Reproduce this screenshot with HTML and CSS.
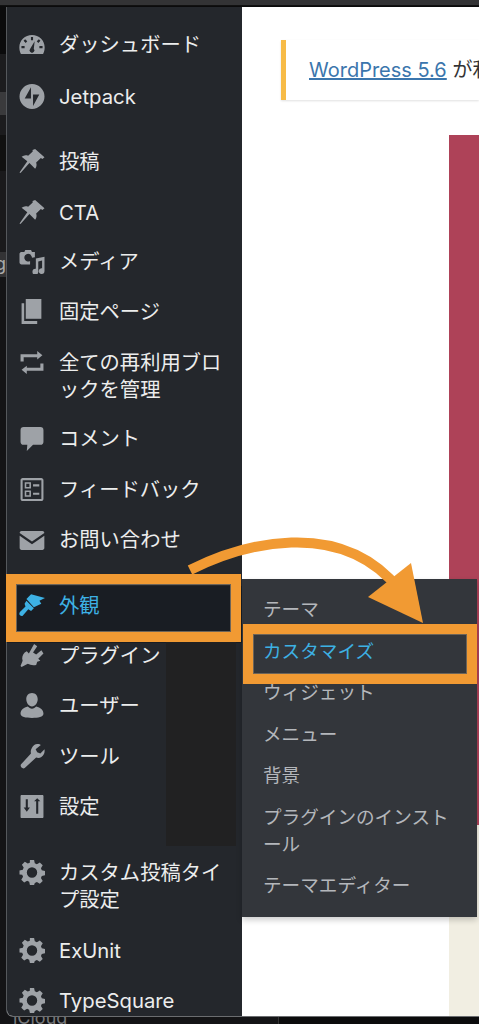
FILE: index.html
```
<!DOCTYPE html>
<html lang="ja">
<head>
<meta charset="utf-8">
<title>WordPress</title>
<link rel="stylesheet" href="styles.css">
</head>
<body>
<div class="topbar"></div>
<div class="backdrop">
  <span class="bd-row r1"></span><span class="bd-row r2"></span><span class="bd-row r3"></span><span class="bd-row r4"></span><span class="bd-row r5"></span><span class="bd-row r6">g</span><span class="bd-row r7"></span>
</div>
<div class="dock"><span class="bd-foot">iCloud</span></div>
<div class="window">
  <nav class="menu">
    <a class="item i-dash"><svg class="ic" viewBox="0 0 24 18"><path d="M12 0C5.400 0 0 5.200 0 11.500c0 2.500.6 4.600 1.500 6.500h21c.9-1.900 1.500-4 1.500-6.500C24 5.200 18.600 0 12 0zm-1 2h2v3h-2zM5.500 4l2 2L6 7.500l-2-2zm13 0L20 5.500l-2 2L16.500 6zM2 10.500h3v2H2zm17 0h3v2h-3zM14.500 6l-.8 7a2.300 2.300 0 1 1-3.400 0z" fill-rule="evenodd"/></svg><span>ダッシュボード</span></a>
    <a class="item i-jet"><svg class="ic" viewBox="0 0 24 24"><path d="M12 0a12 12 0 1 0 0 24 12 12 0 0 0 0-24zm-1 14H5l6-11zm2 7V10h6z" fill-rule="evenodd"/></svg><span>Jetpack</span></a>
    <a class="item i-post"><svg class="ic" viewBox="0 0 24 24"><path d="M15 0l9 8-2 1.500-1.500-.8-4.500 4.300c.8 2.500.3 4.500-1 6L9.500 13.500 1 23l-1-.5 7.500-10.700L2 7.500c2-1.500 4-1.900 6.300-1l4.400-4L12.500 1z"/></svg><span>投稿</span></a>
    <a class="item i-cta"><svg class="ic" viewBox="0 0 24 24"><path d="M15 0l9 8-2 1.500-1.500-.8-4.500 4.300c.8 2.500.3 4.500-1 6L9.500 13.500 1 23l-1-.5 7.500-10.700L2 7.500c2-1.500 4-1.900 6.300-1l4.400-4L12.500 1z"/></svg><span>CTA</span></a>
    <a class="item i-media"><svg class="ic" viewBox="0 0 26 26"><path d="M6 1h6l1 2h3v5.500l-3 .5c-.2-2.200-2-4-4-4a4 4 0 1 0 2 7.500V16H2c-1 0-2-1-2-2V5c0-1 1-2 2-2h3z" fill-rule="evenodd"/><path d="M17 10l9-2v15a3 3 0 1 1-2.500-3v-8l-4 1v11a3 3 0 1 1-6-.5 3 3 0 0 1 3.500-3z"/></svg><span>メディア</span></a>
    <a class="item i-page"><svg class="ic" viewBox="0 0 24 24"><path d="M6 0h15v19H6z"/><path d="M2 4h2.500v17H17v3H2z"/></svg><span>固定ページ</span></a>
    <a class="item i-block two"><svg class="ic" viewBox="0 0 24 24"><path d="M17 1l5 4-5 4V7H4v4H1V4h16zM7 23l-5-4 5-4v2h13v-4h3v7H7z"/></svg><span>全ての再利用ブロックを管理</span></a>
    <a class="item i-comment"><svg class="ic" viewBox="0 0 24 24"><path d="M4 1h16c2 0 3 1 3 3v11c0 2-1 3-3 3h-7l-6 6 .5-6H4c-2 0-3-1-3-3V4c0-2 1-3 3-3z"/></svg><span>コメント</span></a>
    <a class="item i-fb"><svg class="ic" viewBox="0 0 24 24"><path d="M3 1h18c1 0 2 1 2 2v18c0 1-1 2-2 2H3c-1 0-2-1-2-2V3c0-1 1-2 2-2zm0 2v18h18V3zm2 2h6v6H5zm1.500 1.500v3h3v-3zM13 7h6v2h-6zM5 13h6v6H5zm1.500 1.500v3h3v-3zM13 15h6v2h-6z" fill-rule="evenodd"/></svg><span>フィードバック</span></a>
    <a class="item i-mail"><svg class="ic wide" viewBox="0 0 26 20"><path d="M2 0h22c1 0 2 1 2 2L13 11 0 2c0-1 1-2 2-2zM0 5l13 9 13-9v13c0 1-1 2-2 2H2c-1 0-2-1-2-2z"/></svg><span>お問い合わせ</span></a>
    <a class="item i-look"><svg class="ic" viewBox="0 0 28 24"><path d="M13 0l15 4-6 3 2 3-8 4-8-9zM8 7l8 8-3 3-3-2-6 7c-2 1-5-1-3-4l6-6-1-3z"/></svg><span>外観</span></a>
    <a class="item i-plug"><svg class="ic" viewBox="0 0 24 24"><path d="M14 1l3 2-4 6 3 2 5-4 2 3-5 5 2 2-3 1-1 3c-3 1-6 0-8-1L2 23l-1-1 2-5C2 14 3 11 5 9l2-1 2 2z"/></svg><span>プラグイン</span></a>
    <a class="item i-user"><svg class="ic" viewBox="0 0 24 24"><path d="M12 0c3.500 0 5.500 2.800 5.500 6s-2.300 7-5.500 7-5.500-3.800-5.500-7 2-6 5.500-6zM1 20c0-4 3-6 7-7 1 1 2.500 2 4 2s3-1 4-2c4 1 7 3 7 7 0 3-5 4-11 4S1 23 1 20z"/></svg><span>ユーザー</span></a>
    <a class="item i-tool"><svg class="ic" viewBox="0 0 24 24"><path d="M17 0c2 0 3 .5 3.500 1L15.500 5l1.500 3 3 1 4-4c.5 3-.5 6-3 7.500-1.500 1-3.500 1-5 .5L5 23c-2 1.500-5-1.500-3.500-3.500L11 9c-.5-2 0-4 1-5.500C13 1.500 15 0 17 0z"/></svg><span>ツール</span></a>
    <a class="item i-set"><svg class="ic" viewBox="0 0 24 24"><path d="M2 1h20c.5 0 1 .5 1 1v20c0 .5-.5 1-1 1H2c-.5 0-1-.5-1-1V2c0-.5.5-1 1-1zm4 4v8H4l3 4 3-4H8V5zm10 2v12h2V7h2l-3-3-3 3z" fill-rule="evenodd"/></svg><span>設定</span></a>
    <a class="item i-cpt two"><svg class="ic" viewBox="0 0 24 24"><use href="#gear"/></svg><span>カスタム投稿タイプ設定</span></a>
    <a class="item i-ex"><svg class="ic" viewBox="0 0 24 24"><use href="#gear"/></svg><span>ExUnit</span></a>
    <a class="item i-ts"><svg class="ic" viewBox="0 0 24 24"><use href="#gear"/></svg><span>TypeSquare</span></a>
  </nav>
  <main class="content">
    <div class="notice"><a class="link">WordPress 5.6</a> が利用可能です。</div>
    <div class="hero"></div>
  </main>
  <div class="dark-patch"></div>
  <ul class="submenu">
    <li>テーマ</li>
    <li class="cur">カスタマイズ</li>
    <li>ウィジェット</li>
    <li>メニュー</li>
    <li>背景</li>
    <li>プラグインのインスト<br>ール</li>
    <li>テーマエディター</li>
  </ul>
  <div class="box box-main"></div>
  <div class="box box-sub"></div>
  <svg class="arrow" viewBox="0 0 479 1024"><path class="arc" d="M190 570C240 545 340 515 400 590"/><path class="head" d="M368 597L411 563 423 623z"/></svg>
</div>
<svg class="defs" width="0" height="0"><defs><path id="gear" fill-rule="evenodd" d="M10 0h4l.7 3.200 2 .8L19.500 2.300l2.800 2.800-1.700 2.800.8 2 3.100.7v4l-3.100.7-.8 2 1.700 2.800-2.800 2.800-2.800-1.700-2 .8L14 24h-4l-.7-3.200-2-.8-2.800 1.700-2.800-2.800 1.700-2.800-.8-2L0 14v-4l3.200-.7.800-2-1.700-2.800 2.800-2.800 2.800 1.700 2-.8zm2 7a5 5 0 1 0 0 10 5 5 0 0 0 0-10z"/></defs></svg>
</body>
</html>
```

FILE: styles.css
```
* { box-sizing: border-box; }
html, body { margin: 0; padding: 0; }
body {
  width: 479px; height: 1024px; overflow: hidden; position: relative;
  background: #0b0b0c;
  font-family: Inter, "Noto Sans CJK JP", sans-serif;
}
.topbar { height: 6px; background: #333335; border-bottom: 1px solid #111; }
.defs { position: absolute; }
.backdrop { position: absolute; left: 0; top: 54px; width: 6px; height: 970px; overflow: hidden; }
.bd-row { position: absolute; left: 0; width: 6px; color: #aaa; font-size: 18px; line-height: 24px; }
.r1 { top: 0; height: 38px; background: #1c1c1e; }
.r2 { top: 38px; height: 23px; background: #3a3a3c; }
.r3 { top: 61px; height: 20px; background: #1c1c1e; }
.r4 { top: 81px; height: 36px; background: #111; }
.r5 { top: 117px; height: 81px; background: #1a1a1c; }
.r6 { top: 198px; height: 25px; background: #333335; text-indent: -5px; }
.r7 { top: 223px; height: 747px; background: #141416; }
.dock { position: absolute; left: 0; top: 1007px; width: 279px; height: 17px; background: #141416; border-right: 1px solid #333; overflow: hidden; }
.bd-foot { display: block; padding-left: 13px; font-size: 18px; line-height: 22px; color: #77797c; }
.window {
  position: absolute; left: 7px; top: 7px; width: 472px; height: 1009px;
  display: flex; background: #fff;
  border-radius: 0 0 0 6px;
  box-shadow: 0 1px 0 #6b6d70, -1px 0 0 #55585c;
}
.menu {
  width: 235px; flex: none; background: #24272c; padding-top: 25px;
  border-radius: 0 0 0 6px; overflow: hidden;
  display: flex; flex-direction: column;
}
.item { flex: none; display: flex; align-items: flex-start; gap: 14px; padding: 0 8px 0 12px; color: #eceded; font-size: 20.300px; line-height: 26.500px; }
.item span { flex: 1; min-width: 0; }
.ic { width: 26px; height: 25px; flex: none; fill: #9ea2a7; }
.wide { height: 19px; margin-top: 4px; }
.i-dash .ic { height: 19px; margin-top: 3px; }
.i-dash { height: 52px; }
.i-jet { height: 65px; }
.i-post { height: 51px; }
.i-cta { height: 49px; }
.i-media { height: 50px; }
.i-page { height: 51px; }
.i-block { height: 76px; }
.i-comment { height: 51px; }
.i-fb { height: 50px; }
.i-mail { height: 59px; }
.i-look { height: 57px; padding-top: 7px; color: #3db1e4; background: #191d23; }
.i-look .ic { fill: #3db1e4; }
.i-plug { height: 50px; }
.i-user { height: 51px; }
.i-tool { height: 50px; }
.i-set { height: 66px; }
.i-cpt { height: 78px; }
.i-ex { height: 50px; }
.i-ts { height: 28px; }
.content { flex: 1; position: relative; padding: 33px 0 0 39px; min-width: 0; overflow: hidden; }
.notice {
  height: 60px; border-left: 5px solid #f7bb47; padding: 17px 0 0 23px; white-space: nowrap;
  font-size: 20px; line-height: 26px; color: #333; box-shadow: 0 1px 2px rgba(0,0,0,.12);
}
.link { color: #3b76ad; text-decoration: underline; }
.hero {
  position: absolute; left: 207px; top: 128px; right: 0; bottom: 0;
  background: linear-gradient(#ae4258 0, #ae4258 690px, #f1eee2 690px);
}
.dark-patch { position: absolute; left: 159px; top: 635px; width: 70px; height: 204px; background: #212122; }
.submenu {
  position: absolute; left: 235px; top: 572px; width: 235px; height: 338px;
  margin: 0; padding: 17px 0 0 21px; list-style: none;
  background: #33363b; color: #b4b7bb; font-size: 18.600px; line-height: 27px;
  box-shadow: 0 3px 6px rgba(0,0,0,.2);
}
.submenu li { padding-bottom: 14.500px; }
.submenu .cur { color: #3db1e4; }
.box { position: absolute; border: 11px solid #f19a33; outline: 1px solid #6d6458; outline-offset: -11px; }
.box-main { left: -1px; top: 567px; width: 235px; height: 68px; }
.box-sub { left: 236px; top: 617px; width: 234px; height: 60px; }
.arrow { position: absolute; left: -7px; top: -7px; width: 479px; height: 1024px; pointer-events: none; }
.arc { fill: none; stroke: #f19a33; stroke-width: 10px; }
.head { fill: #f19a33; }
```
